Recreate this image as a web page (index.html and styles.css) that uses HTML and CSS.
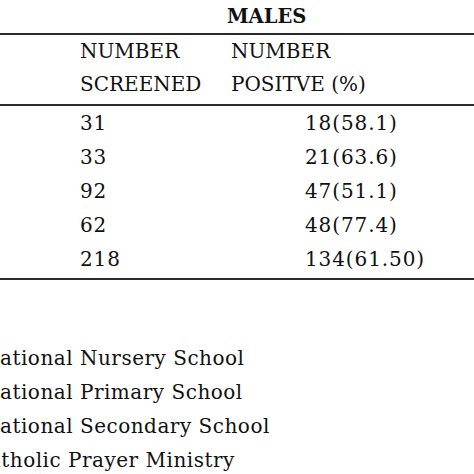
FILE: index.html
```html
<!DOCTYPE html>
<html>
<head>
<meta charset="utf-8">
<link rel="stylesheet" href="styles.css">
</head>
<body>
<div class="page">
  <div class="title-row"><span class="title">MALES</span></div>
  <div class="rule"></div>
  <div class="grid head">
    <div class="c1">NUMBER<br>SCREENED</div>
    <div class="c2">NUMBER<br>POSITVE (%)</div>
  </div>
  <div class="rule r2"></div>
  <div class="grid body">
    <div class="c1">31</div><div class="c2 val">18(58.1)</div>
    <div class="c1">33</div><div class="c2 val">21(63.6)</div>
    <div class="c1">92</div><div class="c2 val">47(51.1)</div>
    <div class="c1">62</div><div class="c2 val">48(77.4)</div>
    <div class="c1">218</div><div class="c2 val">134(61.50)</div>
  </div>
  <div class="rule r3"></div>
  <div class="notes">
    <div class="fn">National Nursery School</div>
    <div class="fn">National Primary School</div>
    <div class="fn">National Secondary School</div>
    <div class="fn cat">Catholic Prayer Ministry</div>
  </div>
</div>
</body>
</html>
```
FILE: styles.css
```css
html, body {
  margin: 0;
  padding: 0;
  background: #fff;
}
body {
  width: 474px;
  height: 474px;
  overflow: hidden;
}
.page {
  font-family: "DejaVu Serif", "Liberation Serif", serif;
  font-size: 20px;
  color: #111;
  display: flex;
  flex-direction: column;
}
.title-row {
  line-height: 33px;
  padding-left: 227px;
}
.title {
  font-weight: bold;
  font-size: 19.5px;
}
.rule {
  height: 2px;
  background: #2a2a2a;
}
.grid {
  display: grid;
  grid-template-columns: 80px 150px 1fr;
}
.grid .c1 { grid-column: 2; }
.grid .c2 { grid-column: 3; }
.head {
  line-height: 33px;
  margin-bottom: 3px;
}
.head .c2 { padding-left: 1px; }
.body {
  line-height: 34px;
  letter-spacing: 0.9px;
  margin-bottom: 2px;
}
.val { padding-left: 75px; }
.notes {
  margin-top: 61px;
  line-height: 34px;
  letter-spacing: 0.5px;
}
.fn {
  white-space: nowrap;
  margin-left: -18px;
}
.fn.cat {
  margin-left: -27px;
}
```
